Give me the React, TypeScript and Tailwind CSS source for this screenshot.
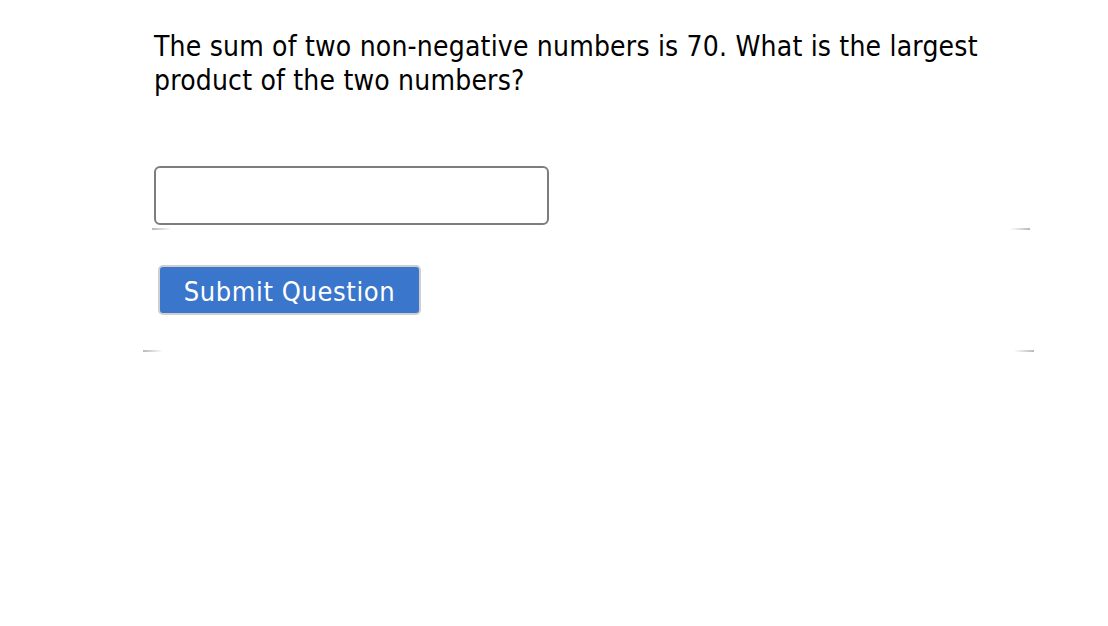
const font = { fontFamily: '"DejaVu Sans Condensed", "DejaVu Sans", sans-serif' };

function FadeRule({ className }: { className: string }) {
  // hr whose ends are the only visible part
  return (
    <div className={`flex justify-between h-[2px] ${className}`}>
      <div className="w-[20px] h-full bg-linear-to-r from-[#b8b8b8] to-transparent" />
      <div className="w-[20px] h-full bg-linear-to-l from-[#b8b8b8] to-transparent" />
    </div>
  );
}

export default function App() {
  return (
    <div className="min-h-[626px] bg-white text-black" style={font}>
      <div className="pl-[154px] pt-[30px]">
        <p className="w-[850px] text-[28px] leading-[34px] tracking-[0.2px] text-black">
          The sum of two non-negative numbers is 70. What is the largest product of the two numbers?
        </p>
        <input
          type="text"
          className="mt-[68px] block w-[395px] h-[59px] rounded-[6px] border-2 border-[#7d7d7d] bg-white outline-none"
        />
      </div>
      <FadeRule className="mt-[3px] ml-[152px] w-[878px]" />
      <div className="pl-[158px] pt-[35px]">
        <button className="w-[263px] h-[50px] pt-[3px] rounded-[5px] border-2 border-[#cfcfcf] bg-[#3a76cb] text-white text-[27px] tracking-[0.6px] leading-none">
          Submit Question
        </button>
      </div>
      <FadeRule className="mt-[35px] ml-[143px] w-[891px]" />
    </div>
  );
}
